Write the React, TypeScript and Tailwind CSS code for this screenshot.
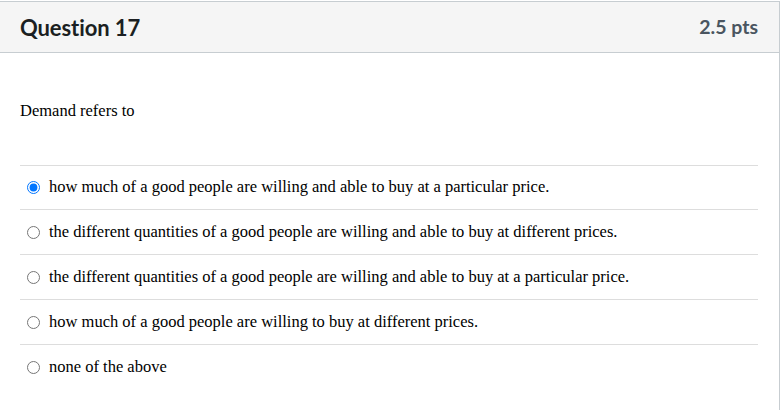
const options = [
  "how much of a good people are willing and able to buy at a particular price.",
  "the different quantities of a good people are willing and able to buy at different prices.",
  "the different quantities of a good people are willing and able to buy at a particular price.",
  "how much of a good people are willing to buy at different prices.",
  "none of the above",
];

export default function App() {
  return (
    <div className="min-h-[410px] bg-white pt-px">
      <div className="w-[780px] border-t border-r border-[#c7cdd1] bg-white min-h-[409px]">
        <div className="flex h-[51px] items-center justify-between border-b border-[#c7cdd1] bg-[#f5f5f5] pl-5 pr-[21px]" style={{ fontFamily: "Lato, 'Liberation Sans', sans-serif" }}>
          <h2 className="text-[22px] font-bold text-[#1b1f22] tracking-[-0.1px]">Question 17</h2>
          <div className="text-[19.5px] font-bold text-[#4a5560]">2.5 pts</div>
        </div>
        <div className="px-5 pt-[48px]" style={{ fontFamily: "'Liberation Serif', 'Times New Roman', serif" }}>
          <p className="text-[16.5px] leading-[20px] text-black">Demand refers to</p>
          <div className="mt-[44px] mr-[1px]">
            {options.map((o, i) => (
              <label key={i} className={`flex items-center border-t border-[#dddddd] ${i === 0 ? "h-[44px]" : "h-[45px]"}`}>
                <input type="radio" name="q17" defaultChecked={i === 0} className="ml-[7px] mr-[9px] h-[13px] w-[13px] accent-[#0075ff]" />
                <span className="text-[16.5px] text-black">{o}</span>
              </label>
            ))}
          </div>
        </div>
      </div>
    </div>
  );
}
